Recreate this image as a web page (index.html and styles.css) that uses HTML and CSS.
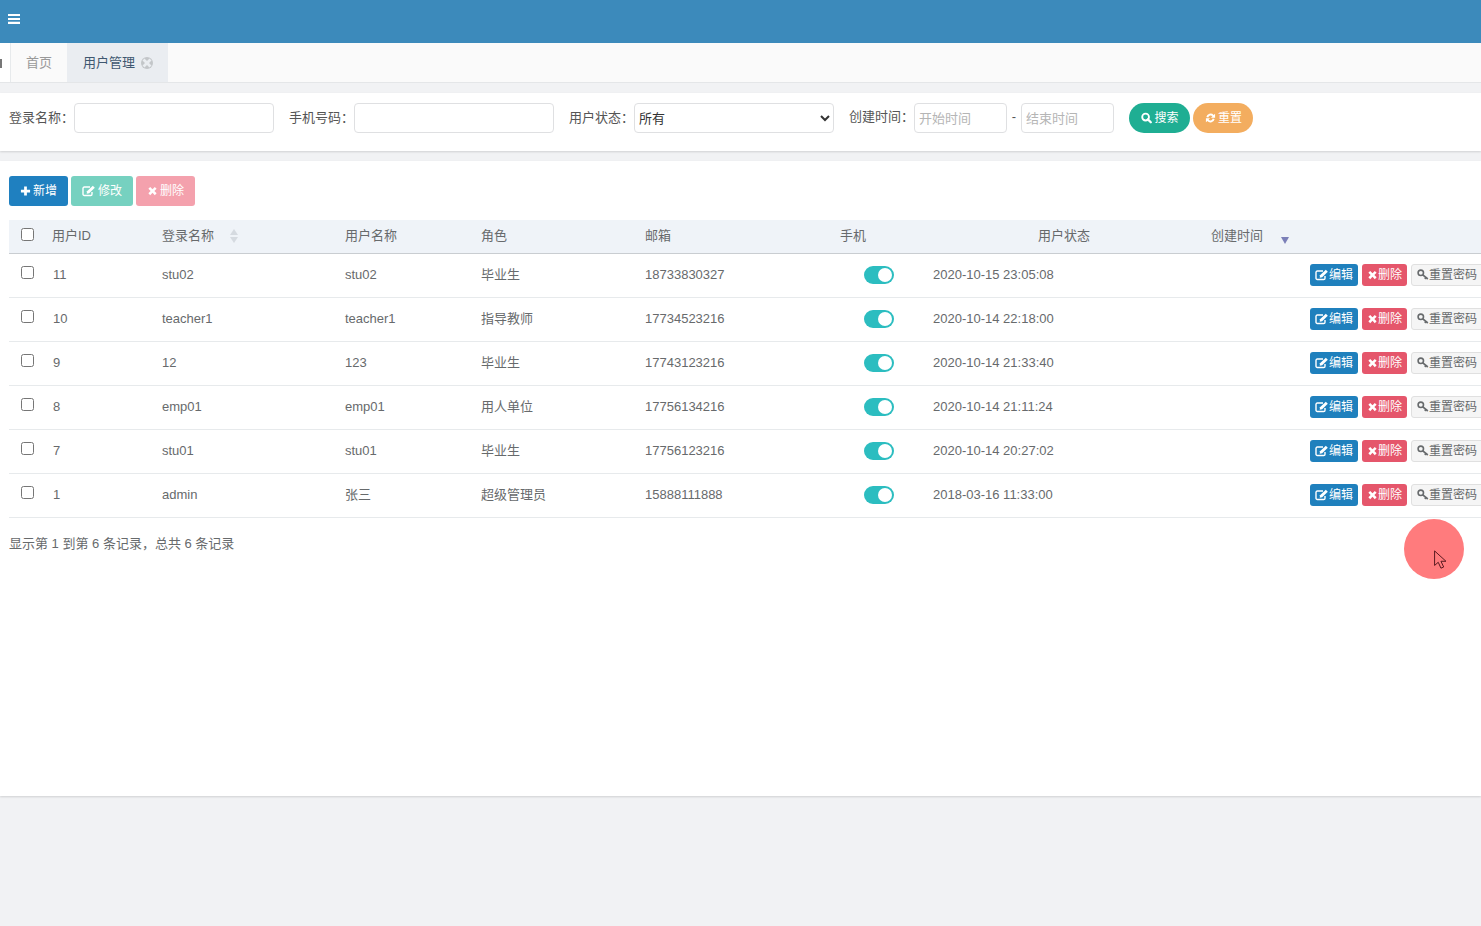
FILE: index.html
```html
<!DOCTYPE html>
<html lang="zh-CN">
<head>
<meta charset="utf-8">
<title>用户管理</title>
<link rel="stylesheet" href="styles.css">
</head>
<body>
<svg class="sprites" aria-hidden="true">
  <symbol id="i-plus" viewBox="0 0 12 12"><path d="M4.500 1h3v3.500H11v3H7.500V11h-3V7.500H1v-3h3.500z" fill="currentColor"/></symbol>
  <symbol id="i-edit" viewBox="0 0 14 12"><path d="M10 7v2.200A1.300 1.300 0 0 1 8.700 10.500H2.300A1.300 1.300 0 0 1 1 9.200V3.300A1.300 1.300 0 0 1 2.300 2H8" fill="none" stroke="currentColor" stroke-width="1.400"/><path d="M5 6.300 10.800.8l2 2L7.200 8.300l-2.500.4z" fill="currentColor"/></symbol>
  <symbol id="i-x" viewBox="0 0 12 12"><path d="M1.500 3.500 3.500 1.500 6 4 8.500 1.500 10.500 3.500 8 6 10.500 8.500 8.500 10.500 6 8 3.500 10.500 1.500 8.500 4 6z" fill="currentColor"/></symbol>
  <symbol id="i-search" viewBox="0 0 12 12"><circle cx="5" cy="5" r="3.700" fill="none" stroke="currentColor" stroke-width="2"/><path d="m7.500 7.500 3.200 3.200" stroke="currentColor" stroke-width="2.400" stroke-linecap="round"/></symbol>
  <symbol id="i-refresh" viewBox="0 0 12 12"><path d="M1.500 5A4.600 4.600 0 0 1 9.500 2.800L11 1.300V5.800H6.500L8.100 4.200A2.600 2.600 0 0 0 3.600 5.400zM10.500 7A4.600 4.600 0 0 1 2.500 9.200L1 10.700V6.200H5.500L3.900 7.800A2.600 2.600 0 0 0 8.400 6.600z" fill="currentColor"/></symbol>
  <symbol id="i-key" viewBox="0 0 12 12"><circle cx="3.800" cy="3.800" r="2.700" fill="none" stroke="currentColor" stroke-width="1.600"/><path d="M5.800 5.800l5 4.200M9 8.500l-1.200 1.300" stroke="currentColor" stroke-width="1.700" fill="none"/></symbol>
</svg>

<header class="topbar">
  <svg class="menu-icon" viewBox="0 0 13 11" preserveAspectRatio="none"><path d="M0 0h13v2.300H0zM0 4.300h13v2.300H0zM0 8.600h13v2.300H0z" fill="currentColor"/></svg>
</header>

<nav class="tabs">
  <span class="tab-back"><i></i></span>
  <a class="tab">首页</a>
  <a class="tab tab-active">用户管理<span class="tab-close"><svg viewBox="0 0 12 12"><use href="#i-x"/></svg></span></a>
</nav>

<form class="search card">
  <label class="field-label">登录名称：</label>
  <input class="input input-wide" type="text">
  <label class="field-label gap-left">手机号码：</label>
  <input class="input input-wide" type="text">
  <label class="field-label gap-left">用户状态：</label>
  <select class="input input-wide select"><option>所有</option></select>
  <label class="field-label gap-left date-label">创建时间：</label>
  <input class="input input-date" type="text" placeholder="开始时间">
  <span class="dash">-</span>
  <input class="input input-date" type="text" placeholder="结束时间">
  <a class="pill pill-green"><svg class="ico"><use href="#i-search"/></svg>搜索</a>
  <a class="pill pill-orange"><svg class="ico"><use href="#i-refresh"/></svg>重置</a>
</form>

<main class="panel card">
  <div class="toolbar">
    <a class="btn btn-blue"><svg class="ico"><use href="#i-plus"/></svg>新增</a>
    <a class="btn btn-teal"><svg class="ico ico-wide"><use href="#i-edit"/></svg>修改</a>
    <a class="btn btn-pink"><svg class="ico"><use href="#i-x"/></svg>删除</a>
  </div>

  <div class="thead">
    <span class="hcell"><input type="checkbox" class="check"></span>
    <span>用户ID</span>
    <span class="sortable">登录名称<i class="sort-both"></i></span>
    <span>用户名称</span>
    <span>角色</span>
    <span>邮箱</span>
    <span>手机</span>
    <span>用户状态</span>
    <span class="sortable">创建时间<i class="sort-desc"></i></span>
  </div>

  <div class="row">
    <span><input type="checkbox" class="check"></span><span>11</span><span>stu02</span><span>stu02</span><span>毕业生</span><span>18733830327</span>
    <span class="switch"><i></i></span><span>2020-10-15 23:05:08</span>
    <span class="actions"><a class="mini mini-blue"><svg class="ico ico-wide"><use href="#i-edit"/></svg>编辑</a><a class="mini mini-red"><svg class="ico"><use href="#i-x"/></svg>删除</a><a class="mini mini-light"><svg class="ico"><use href="#i-key"/></svg>重置密码</a></span>
  </div>
  <div class="row">
    <span><input type="checkbox" class="check"></span><span>10</span><span>teacher1</span><span>teacher1</span><span>指导教师</span><span>17734523216</span>
    <span class="switch"><i></i></span><span>2020-10-14 22:18:00</span>
    <span class="actions"><a class="mini mini-blue"><svg class="ico ico-wide"><use href="#i-edit"/></svg>编辑</a><a class="mini mini-red"><svg class="ico"><use href="#i-x"/></svg>删除</a><a class="mini mini-light"><svg class="ico"><use href="#i-key"/></svg>重置密码</a></span>
  </div>
  <div class="row">
    <span><input type="checkbox" class="check"></span><span>9</span><span>12</span><span>123</span><span>毕业生</span><span>17743123216</span>
    <span class="switch"><i></i></span><span>2020-10-14 21:33:40</span>
    <span class="actions"><a class="mini mini-blue"><svg class="ico ico-wide"><use href="#i-edit"/></svg>编辑</a><a class="mini mini-red"><svg class="ico"><use href="#i-x"/></svg>删除</a><a class="mini mini-light"><svg class="ico"><use href="#i-key"/></svg>重置密码</a></span>
  </div>
  <div class="row">
    <span><input type="checkbox" class="check"></span><span>8</span><span>emp01</span><span>emp01</span><span>用人单位</span><span>17756134216</span>
    <span class="switch"><i></i></span><span>2020-10-14 21:11:24</span>
    <span class="actions"><a class="mini mini-blue"><svg class="ico ico-wide"><use href="#i-edit"/></svg>编辑</a><a class="mini mini-red"><svg class="ico"><use href="#i-x"/></svg>删除</a><a class="mini mini-light"><svg class="ico"><use href="#i-key"/></svg>重置密码</a></span>
  </div>
  <div class="row">
    <span><input type="checkbox" class="check"></span><span>7</span><span>stu01</span><span>stu01</span><span>毕业生</span><span>17756123216</span>
    <span class="switch"><i></i></span><span>2020-10-14 20:27:02</span>
    <span class="actions"><a class="mini mini-blue"><svg class="ico ico-wide"><use href="#i-edit"/></svg>编辑</a><a class="mini mini-red"><svg class="ico"><use href="#i-x"/></svg>删除</a><a class="mini mini-light"><svg class="ico"><use href="#i-key"/></svg>重置密码</a></span>
  </div>
  <div class="row">
    <span><input type="checkbox" class="check"></span><span>1</span><span>admin</span><span>张三</span><span>超级管理员</span><span>15888111888</span>
    <span class="switch"><i></i></span><span>2018-03-16 11:33:00</span>
    <span class="actions"><a class="mini mini-blue"><svg class="ico ico-wide"><use href="#i-edit"/></svg>编辑</a><a class="mini mini-red"><svg class="ico"><use href="#i-x"/></svg>删除</a><a class="mini mini-light"><svg class="ico"><use href="#i-key"/></svg>重置密码</a></span>
  </div>

  <p class="summary">显示第 1 到第 6 条记录，总共 6 条记录</p>
</main>

<div class="cursor-spot">
  <svg viewBox="0 0 16 22"><path d="M1.500 1v16l4-3.500 3 6.500 3-1.300-3-6.300h5.500z" fill="none" stroke="#5a1a20" stroke-width="1.100" stroke-linejoin="round"/></svg>
</div>
</body>
</html>
```
FILE: styles.css
```css
* { box-sizing: border-box; }
html, body { margin: 0; height: 926px; overflow: hidden; }
body {
  background: #f1f2f4;
  color: #676a6c;
  font: 13px/18px "Liberation Sans", "Noto Sans CJK SC", sans-serif;
  position: relative;
  width: 1481px;
}
.sprites { display: none; }
a { text-decoration: none; }

.topbar { height: 43px; background: #3c8abb; color: #fff; padding: 14px 0 0 8px; }
.menu-icon { display: block; width: 12px; height: 10px; }

.tabs { height: 40px; background: #fafafa; border-bottom: 1px solid #e4e6e8; display: flex; }
.tab-back { width: 11px; background: #fff; border-right: 1px solid #e7eaec; position: relative; }
.tab-back i { position: absolute; left: 0; top: 16px; width: 2px; height: 9px; background: #777; }
.tab { display: flex; align-items: center; padding: 0 15px; color: #999; }
.tab-active { background: #eaedf1; color: #3f5870; width: 101px; padding-left: 16px; }
.tab-close { width: 12px; height: 12px; margin-left: 6px; border-radius: 50%; background: #c3c6c9; color: #eaedf1; display: block; }
.tab-close svg { display: block; width: 12px; height: 12px; }

.card { background: #fff; box-shadow: 0 1px 2px rgba(0,0,0,.14); }

.search { margin-top: 10px; height: 58px; display: flex; align-items: flex-start; padding: 10px 0 0 9px; }
.field-label { color: #555; width: 65px; white-space: nowrap; margin-top: 6px; }
.gap-left { margin-left: 15px; }
.date-label { margin-top: 5px; }
.input { height: 30px; border: 1px solid #dfe0e2; border-radius: 4px; background: #fff; font: inherit; color: #333; padding: 0 4px; }
.input::placeholder { color: #b5b5b5; }
.input-wide { width: 200px; }
.input-date { width: 93px; }
.dash { width: 14px; text-align: center; color: #555; margin-top: 5px; }
.select { padding: 0; }
.pill {
  height: 30px; width: 61px; border-radius: 15px; color: #fff; display: flex; align-items: center; justify-content: center; font-size: 12px; gap: 1px; padding-left: 1px;
}
.pill-green { background: #1fae93; margin-left: 15px; }
.pill-orange { background: #f3ad5f; margin-left: 3px; width: 60px; }

.ico { width: 11px; height: 12px; margin-right: 1px; flex: none; }
.ico-wide { width: 14px; }

.panel { margin-top: 10px; height: 635px; padding: 15px 0 0 9px; overflow: hidden; }
.toolbar { display: flex; gap: 3px; height: 30px; }
.btn { height: 30px; width: 59px; border-radius: 3px; color: #fff; display: flex; align-items: center; justify-content: center; font-size: 12px; gap: 1px; }
.btn-blue { background: #1f80c0; }
.btn-teal { background: #76d1c0; width: 62px; }
.btn-pink { background: #f4a1ad; }

.thead, .row { display: grid; width: 1472px; align-items: center; }
.thead {
  margin-top: 14px; height: 34px; background: #eff3f8; border-bottom: 1px solid #c9cdd1; color: #676a6c;
  grid-template-columns: 43px 110px 183px 136px 164px 195px 198px 173px 1fr;
}
.thead > span { margin-bottom: 1px; }
.thead > .hcell { margin-bottom: 0; }
.hcell { display: flex; }
.check { width: 13px; height: 13px; margin: 0 0 4px 12px; display: block; }
.row .check { margin-bottom: 6px; }
.sortable { display: flex; align-items: center; }
.sort-both { margin-left: 16px; width: 9px; height: 14px; position: relative; }
.sort-both::before, .sort-both::after { content: ""; position: absolute; left: 0; border-style: solid; border-color: transparent; border-width: 0 4.500px; }
.sort-both::before { top: 0; border-bottom: 6px solid #d5dae0; }
.sort-both::after { bottom: 0; border-top: 6px solid #d5dae0; }
.sort-desc { margin: 8px 0 0 18px; border: 4.500px solid transparent; border-top: 7px solid #7b7fb8; border-bottom: 0; }

.row {
  height: 44px; border-bottom: 1px solid #e7eaec;
  grid-template-columns: 44px 109px 183px 136px 164px 195px 93px 339px 1fr;
  color: #676a6c;
}
.row > span:nth-child(n+2) { margin-bottom: 2px; }
.switch { width: 30px; height: 18px; border-radius: 9px; background: #2cbdc0; position: relative; display: block; }
.row > .switch { margin-left: 24px; margin-bottom: 3px; }
.switch i { position: absolute; right: 2px; top: 2px; width: 14px; height: 14px; border-radius: 50%; background: #fff; }

.actions { display: flex; gap: 4px; justify-self: start; margin-left: 38px; width: 175px; }
.mini { height: 22px; border-radius: 3px; display: flex; align-items: center; justify-content: center; flex: none; font-size: 12px; }
.mini-blue { background: #1f80bd; color: #fff; width: 48px; }
.mini-red { background: #e5566b; color: #fff; width: 45px; }
.mini-light { background: #f5f5f5; color: #676a6c; border: 1px solid #e0e0e0; width: 76px; justify-content: flex-start; padding-left: 5px; }
.mini .ico { margin-right: 0; }
.mini-light .ico { width: 12px; }

.summary { margin: 17px 0 0; color: #676a6c; }

.cursor-spot {
  position: absolute; left: 1404px; top: 519px; width: 60px; height: 60px; border-radius: 50%; background: #ff7b7d;
}
.cursor-spot svg { position: absolute; left: 29px; top: 31px; width: 15px; height: 20px; }
```
